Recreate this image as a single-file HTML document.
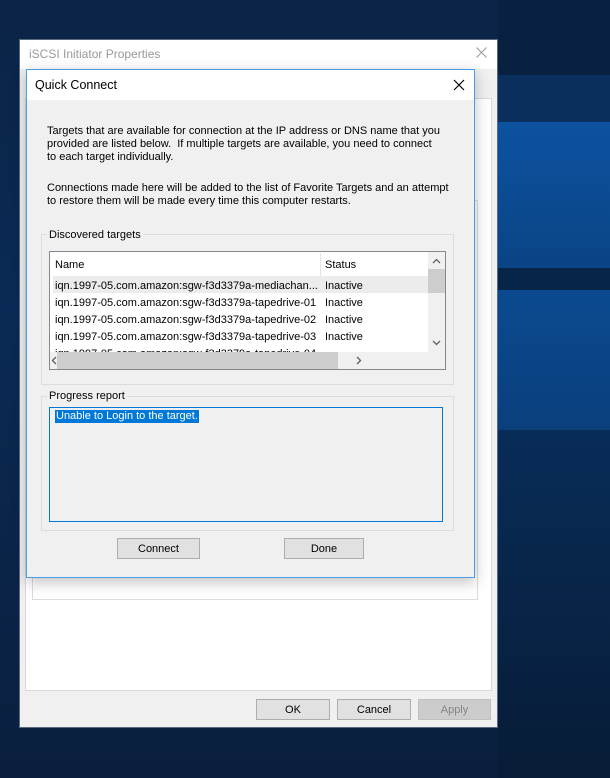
<!DOCTYPE html>
<html><head><meta charset="utf-8"><style>
*{margin:0;padding:0;box-sizing:border-box}
body{width:610px;height:778px;position:relative;overflow:hidden;background:#0a1f3d;font-family:"Liberation Sans",sans-serif;font-size:11px;color:#000}
.a{position:absolute}
.t{position:absolute;white-space:nowrap;line-height:13px}
.btn{position:absolute;background:#e1e1e1;border:1px solid #adadad;text-align:center;line-height:20px;font-size:11px}
</style></head><body>
<div class="a" style="left:0;top:0;width:610px;height:778px;background:linear-gradient(180deg,#0b2447 0%,#0a2a55 40%,#0a1f3d 100%)"></div>
<div class="a" style="left:498px;top:0;width:112px;height:75px;background:#082140"></div>
<div class="a" style="left:498px;top:75px;width:112px;height:50px;background:#0a2f5c"></div>
<div class="a" style="left:498px;top:122px;width:112px;height:146px;background:linear-gradient(180deg,#0d52a0,#0a4485)"></div>
<div class="a" style="left:498px;top:268px;width:112px;height:22px;background:#072548"></div>
<div class="a" style="left:498px;top:290px;width:112px;height:140px;background:linear-gradient(180deg,#0b4a90,#0a3f7c)"></div>
<div class="a" style="left:498px;top:430px;width:112px;height:348px;background:linear-gradient(180deg,#082c58,#071c36)"></div>
<div class="a" style="left:19px;top:39px;width:479px;height:689px;background:#f0f0f0;border:1px solid #5a6a80"></div>
<div class="a" style="left:20px;top:40px;width:477px;height:29px;background:#fff"></div>
<div class="t" style="left:29px;top:48px;font-size:12px;color:#999">iSCSI Initiator Properties</div>
<svg class="a" style="left:476px;top:47px" width="11" height="11"><path d="M0.5 0.5L10.5 10.5M10.5 0.5L0.5 10.5" stroke="#999" stroke-width="1"/></svg>
<div class="a" style="left:25px;top:98px;width:467px;height:593px;background:#fff;border:1px solid #d9d9d9"></div>
<div class="a" style="left:32px;top:200px;width:446px;height:400px;border:1px solid #dcdcdc"></div>
<div class="btn" style="left:256px;top:699px;width:74px;height:21px">OK</div>
<div class="btn" style="left:337px;top:699px;width:74px;height:21px">Cancel</div>
<div class="btn" style="left:418px;top:699px;width:73px;height:21px;background:#cccccc;border-color:#bfbfbf;color:#838383">Apply</div>
<div class="a" style="left:26px;top:69px;width:449px;height:509px;background:#f0f0f0;border:1px solid #4a9ee8;box-shadow:0 4px 14px rgba(0,0,0,.25)"></div>
<div class="a" style="left:27px;top:70px;width:447px;height:30px;background:#fff"></div>
<div class="t" style="left:35px;top:78px;font-size:12.5px;line-height:15px">Quick Connect</div>
<svg class="a" style="left:453px;top:79px" width="12" height="12"><path d="M1 1L11 11M11 1L1 11" stroke="#000" stroke-width="1.2"/></svg>
<div class="t" style="left:47px;top:125px;font-size:11px">Targets that are available for connection at the IP address or DNS name that you<br>provided are listed below.&nbsp; If multiple targets are available, you need to connect<br>to each target individually.</div>
<div class="t" style="left:47px;top:182px;font-size:11px">Connections made here will be added to the list of Favorite Targets and an attempt<br>to restore them will be made every time this computer restarts.</div>
<div class="a" style="left:41px;top:234px;width:413px;height:151px;border:1px solid #dcdcdc"></div>
<div class="t" style="left:47px;top:229px;background:#f0f0f0;padding:0 2px;font-size:11px">Discovered targets</div>
<div class="a" style="left:49px;top:251px;width:397px;height:119px;background:#fff;border:1px solid #828790"></div>
<div class="a" style="left:320px;top:253px;width:1px;height:23px;background:#e5e5e5"></div>
<div class="t" style="left:55px;top:259px">Name</div>
<div class="t" style="left:325px;top:259px">Status</div>
<div class="a" style="left:53px;top:276px;width:375px;height:17px;background:#ececec"></div>
<div class="t" style="left:55px;top:280px">iqn.1997-05.com.amazon:sgw-f3d3379a-mediachan...</div>
<div class="t" style="left:55px;top:297px">iqn.1997-05.com.amazon:sgw-f3d3379a-tapedrive-01</div>
<div class="t" style="left:55px;top:314px">iqn.1997-05.com.amazon:sgw-f3d3379a-tapedrive-02</div>
<div class="t" style="left:55px;top:331px">iqn.1997-05.com.amazon:sgw-f3d3379a-tapedrive-03</div>
<div class="t" style="left:325px;top:280px">Inactive</div>
<div class="t" style="left:325px;top:297px">Inactive</div>
<div class="t" style="left:325px;top:314px">Inactive</div>
<div class="t" style="left:325px;top:331px">Inactive</div>
<div class="a" style="left:50px;top:346px;width:378px;height:6px;overflow:hidden"><div class="t" style="left:5px;top:2px">iqn.1997-05.com.amazon:sgw-f3d3379a-tapedrive-04</div></div>
<div class="a" style="left:428px;top:252px;width:17px;height:100px;background:#f0f0f0"></div>
<div class="a" style="left:428px;top:269px;width:17px;height:24px;background:#cdcdcd"></div>
<svg class="a" style="left:432px;top:258px" width="9" height="6"><path d="M1 5L4.5 1.5L8 5" fill="none" stroke="#606060" stroke-width="1.3"/></svg>
<svg class="a" style="left:432px;top:340px" width="9" height="6"><path d="M1 1L4.5 4.5L8 1" fill="none" stroke="#606060" stroke-width="1.3"/></svg>
<div class="a" style="left:50px;top:352px;width:395px;height:17px;background:#f0f0f0"></div>
<div class="a" style="left:57px;top:352px;width:281px;height:17px;background:#cdcdcd"></div>
<svg class="a" style="left:51px;top:356px" width="6" height="9"><path d="M5 1L1.5 4.5L5 8" fill="none" stroke="#606060" stroke-width="1.3"/></svg>
<svg class="a" style="left:356px;top:356px" width="6" height="9"><path d="M1 1L4.5 4.5L1 8" fill="none" stroke="#606060" stroke-width="1.3"/></svg>
<div class="a" style="left:41px;top:396px;width:413px;height:135px;border:1px solid #dcdcdc"></div>
<div class="t" style="left:47px;top:390px;background:#f0f0f0;padding:0 2px;font-size:11px">Progress report</div>
<div class="a" style="left:49px;top:407px;width:394px;height:115px;background:#f0f0f0;border:1px solid #0078d7"></div>
<div class="t" style="left:55px;top:410px;background:#0078d7;color:#fff;padding:0 1px;font-size:11px">Unable to Login to the target.</div>
<div class="btn" style="left:117px;top:538px;width:83px;height:21px">Connect</div>
<div class="btn" style="left:284px;top:538px;width:80px;height:21px">Done</div>
</body></html>
